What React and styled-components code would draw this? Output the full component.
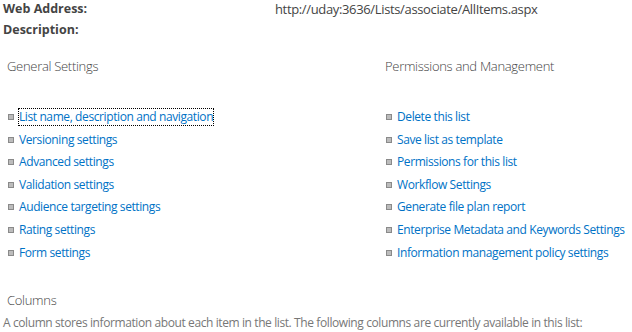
import React from 'react';
import styled, { createGlobalStyle } from 'styled-components';

const Global = createGlobalStyle`
  body {
    margin: 0;
    background: #fff;
    font-family: "Open Sans", "Liberation Sans", sans-serif;
    font-size: 12px;
    letter-spacing: -0.4px;
    color: #444;
  }
`;

const Page = styled.div`
  width: 632px;
  height: 332px;
  overflow: hidden;
`;

const InfoTable = styled.div`
  display: grid;
  grid-template-columns: 272px 1fr;
  row-gap: 3px;
  padding: 0 0 0 3px;
`;

const Label = styled.div`
  font-size: 12.5px;
  font-weight: 700;
  color: #444;
  line-height: 18px;
  letter-spacing: 0;
`;

const Value = styled.div`
  font-size: 13px;
  color: #444;
  line-height: 18px;
  letter-spacing: -0.35px;
`;

const Sections = styled.div`
  display: grid;
  grid-template-columns: 378px 1fr;
  padding-left: 7px;
  margin-top: 18px;
`;

const Heading = styled.div`
  font-size: 13px;
  font-weight: 300;
  color: #444;
  line-height: 18px;
  letter-spacing: -0.3px;
  margin-bottom: 33px;
`;

const LinkList = styled.ul`
  list-style: none;
  margin: 0;
  padding: 0;
  display: flex;
  flex-direction: column;
  gap: 4.6px;
`;

const Item = styled.li`
  display: flex;
  align-items: center;
  height: 18px;
  margin-left: ${p => p.$shift || 0}px;
`;

const Bullet = styled.span`
  width: 4px;
  height: 4px;
  border: 1px solid #8a8a8a;
  background: #bcbcbc;
  margin-right: 5px;
  flex: none;
`;

const Link = styled.a`
  color: #0072c6;
  text-decoration: none;
  white-space: nowrap;
  line-height: 16px;
  ${p => p.$focused && `
    outline: 1px dotted #000;
    outline-offset: 0;
  `}
`;

const Columns = styled.div`
  padding-left: 3px;
  margin-top: 29px;
`;

const ColumnsTitle = styled.div`
  font-size: 13px;
  font-weight: 300;
  letter-spacing: -0.3px;
  color: #444;
  padding-left: 4px;
  line-height: 18px;
`;

const ColumnsText = styled.div`
  color: #777;
  margin-top: 5px;
  line-height: 18px;
  white-space: nowrap;
`;

const general = [
  'List name, description and navigation',
  'Versioning settings',
  'Advanced settings',
  'Validation settings',
  'Audience targeting settings',
  'Rating settings',
  'Form settings',
];

const permissions = [
  'Delete this list',
  'Save list as template',
  'Permissions for this list',
  'Workflow Settings',
  'Generate file plan report',
  'Enterprise Metadata and Keywords Settings',
  'Information management policy settings',
];

function Section({ title, links, shift }) {
  return (
    <div>
      <Heading>{title}</Heading>
      <LinkList>
        {links.map((l, i) => (
          <Item key={l} $shift={shift}>
            <Bullet />
            <Link href="#" $focused={title === 'General Settings' && i === 0}>{l}</Link>
          </Item>
        ))}
      </LinkList>
    </div>
  );
}

export default function App() {
  return (
    <Page>
      <Global />
      <InfoTable>
        <Label>Web Address:</Label>
        <Value>http://uday:3636/Lists/associate/AllItems.aspx</Value>
        <Label>Description:</Label>
        <Value />
      </InfoTable>
      <Sections>
        <Section title="General Settings" links={general} shift={1} />
        <Section title="Permissions and Management" links={permissions} shift={1} />
      </Sections>
      <Columns>
        <ColumnsTitle>Columns</ColumnsTitle>
        <ColumnsText>
          A column stores information about each item in the list. The following columns are currently available in this list:
        </ColumnsText>
      </Columns>
    </Page>
  );
}
